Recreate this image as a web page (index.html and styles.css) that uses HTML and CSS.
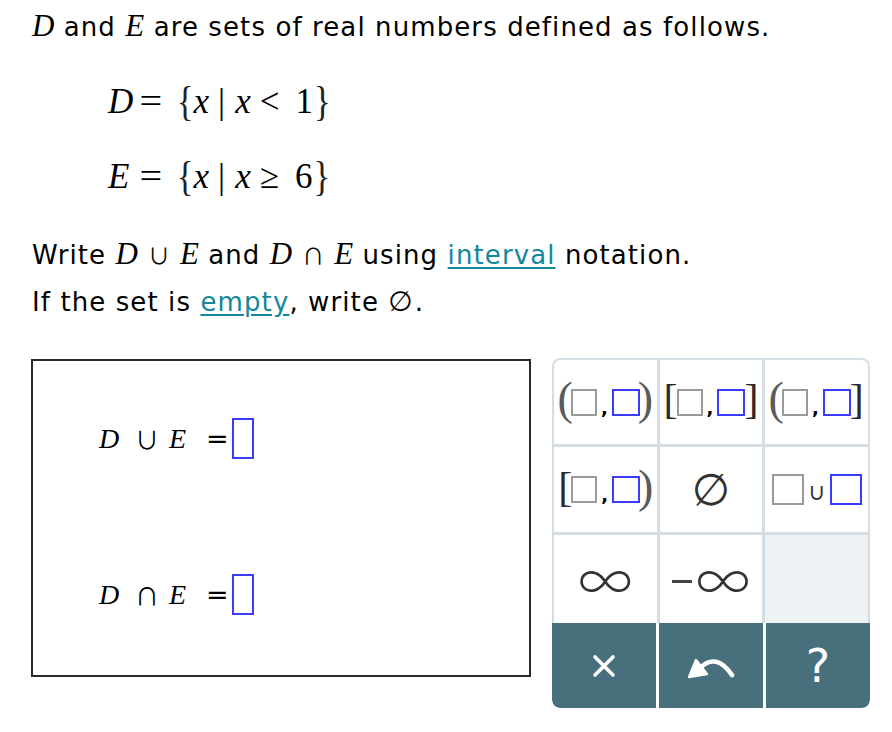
FILE: index.html
```html
<!DOCTYPE html>
<html>
<head>
<meta charset="utf-8">
<link rel="stylesheet" href="styles.css">
</head>
<body>
<div class="page">
  <p class="intro"><i class="mv">D</i> and <i class="mv">E</i> are sets of real numbers defined as follows.</p>
  <div class="defs">
    <div class="def"><i class="mi lead">D</i><span class="eq">=</span><span class="br">{</span><i class="mi">x</i><span class="bar">|</span><i class="mi sp-x">x</i><span class="rel">&lt;</span><span class="num">1</span><span class="br close">}</span></div>
    <div class="def"><i class="mi lead">E</i><span class="eq">=</span><span class="br">{</span><i class="mi">x</i><span class="bar">|</span><i class="mi sp-x">x</i><span class="rel">≥</span><span class="num">6</span><span class="br close">}</span></div>
  </div>
  <p class="instr first">Write <i class="mv">D</i><span class="op"><span class="op-g">∪</span></span><i class="mv">E</i> and <i class="mv">D</i><span class="op"><span class="op-g">∩</span></span><i class="mv">E</i> using <a class="link" href="#">interval</a> notation.</p>
  <p class="instr">If the set is <a class="link" href="#">empty</a>, write <span class="empty">∅</span>.</p>

  <div class="work">
    <div class="answer-box">
      <div class="ans-row">
        <i class="a-var a-d">D</i><span class="a-op">∪</span><i class="a-var a-e">E</i><span class="a-eq">=</span><span class="slot"></span>
      </div>
      <div class="ans-row">
        <i class="a-var a-d">D</i><span class="a-op">∩</span><i class="a-var a-e">E</i><span class="a-eq">=</span><span class="slot"></span>
      </div>
    </div>

    <div class="keypad">
      <div class="keys">
        <div class="key"><span class="paren">(</span><span class="kbox grey"></span><span class="comma">,</span><span class="kbox blue"></span><span class="paren">)</span></div>
        <div class="key"><span class="brack">[</span><span class="kbox grey"></span><span class="comma">,</span><span class="kbox blue"></span><span class="brack">]</span></div>
        <div class="key"><span class="paren">(</span><span class="kbox grey"></span><span class="comma">,</span><span class="kbox blue"></span><span class="brack">]</span></div>
        <div class="key"><span class="brack">[</span><span class="kbox grey"></span><span class="comma">,</span><span class="kbox blue"></span><span class="paren">)</span></div>
        <div class="key"><span class="k-empty">∅</span></div>
        <div class="key"><span class="kbox big grey"></span><span class="k-cup">∪</span><span class="kbox big blue"></span></div>
        <div class="key"><span class="inf">∞</span></div>
        <div class="key"><span class="minus"></span><span class="inf">∞</span></div>
        <div class="key blank"></div>
      </div>
      <div class="actions">
        <div class="act">
          <svg width="24" height="24" viewBox="0 0 24 24"><path d="M3 3 L21 21 M21 3 L3 21" stroke="#fff" stroke-width="3.6" stroke-linecap="round" fill="none"/></svg>
        </div>
        <div class="act">
          <svg class="undo" width="48" height="24" viewBox="0 0 48 24"><path d="M13 12 Q 29 -4 45 19" stroke="#fff" stroke-width="4.6" stroke-linecap="round" fill="none"/><path d="M2 21 L9 4 L20 18 Z" fill="#fff" stroke="#fff" stroke-width="2.4" stroke-linejoin="round"/></svg>
        </div>
        <div class="act"><span class="help">?</span></div>
      </div>
    </div>
  </div>
</div>
</body>
</html>
```

FILE: styles.css
```css
html, body {
  margin: 0;
  padding: 0;
  background: #fff;
}

.page {
  padding: 10px 0 0 32px;
  font-family: "DejaVu Sans", Verdana, sans-serif;
  color: #000;
}

.intro {
  margin: 0;
  height: 32px;
  font-size: 26px;
  line-height: 32px;
  letter-spacing: 1.1px;
  white-space: nowrap;
}

.mv {
  font-family: "Liberation Serif", "Times New Roman", serif;
  font-style: italic;
  font-size: 31px;
  letter-spacing: 0;
}

.defs {
  margin-top: 22px;
  padding-left: 76px;
  font-family: "Liberation Serif", "Times New Roman", serif;
  font-size: 35px;
}

.def {
  height: 75px;
  line-height: 75px;
  white-space: nowrap;
}

.mi {
  font-style: italic;
}

.lead {
  display: inline-block;
  width: 28px;
}

.eq {
  display: inline-block;
  margin-left: 5px;
  transform: scaleX(1.15);
}

.br {
  display: inline-block;
  color: #222;
  transform: scaleY(1.18);
  margin-left: 16px;
}

.br.close {
  margin-left: 1px;
}

.bar {
  margin-left: 9px;
}

.sp-x {
  margin-left: 10px;
}

.rel {
  margin-left: 9px;
}

.num {
  margin-left: 16px;
}

.instr {
  margin: 0;
  height: 48px;
  font-size: 26px;
  line-height: 48px;
  letter-spacing: 1.1px;
  white-space: nowrap;
}

.instr.first {
  margin-top: 16px;
}

.op {
  display: inline-block;
  width: 42px;
  text-align: center;
  letter-spacing: 0;
}

.op-g {
  display: inline-block;
  font-family: "Noto Sans CJK JP", "DejaVu Sans", sans-serif;
  font-size: 22px;
}

.link {
  color: #12889a;
  text-decoration: underline;
  text-underline-offset: 3px;
}

.empty {
  font-size: 28px;
  letter-spacing: 0;
  margin-right: 2px;
}

.work {
  display: flex;
  align-items: flex-start;
  margin: 32px 0 0 -1px;
}

.answer-box {
  box-sizing: border-box;
  width: 500px;
  height: 318px;
  margin-top: 1px;
  border: 2px solid #2a2a2a;
  padding: 57px 0 0 66px;
  display: flex;
  flex-direction: column;
  gap: 115px;
}

.ans-row {
  display: flex;
  align-items: center;
  height: 41px;
}

.a-var {
  display: inline-block;
  font-family: "Liberation Serif", "Times New Roman", serif;
  font-style: italic;
  font-size: 28px;
}

.a-d { width: 36px; }
.a-e { width: 37px; }

.a-op {
  display: inline-block;
  width: 34px;
  font-family: "Noto Sans CJK JP", "DejaVu Sans", sans-serif;
  font-size: 24px;
  line-height: 32px;
}

.a-eq {
  display: inline-block;
  width: 26px;
  font-family: "DejaVu Sans", sans-serif;
  font-size: 27px;
}

.slot {
  box-sizing: border-box;
  width: 22px;
  height: 41px;
  border: 2px solid #3b3bff;
}

.keypad {
  width: 318px;
  margin-left: 21px;
  border-radius: 8px;
  overflow: hidden;
}

.keys {
  display: grid;
  grid-template-columns: 1fr 1fr 1fr;
  grid-template-rows: 84px 85px 88px;
  gap: 3px;
  padding: 2px 2px 0 2px;
  background: #d4dee2;
  border-radius: 8px 8px 0 0;
}

.key {
  background: #fff;
  display: flex;
  align-items: center;
  justify-content: center;
}

.key:first-child { border-top-left-radius: 6px; }
.key:nth-child(3) { border-top-right-radius: 6px; }

.key.blank {
  background: #eef2f4;
}

.paren, .brack {
  font-family: "Liberation Serif", "Times New Roman", serif;
  font-size: 46px;
  line-height: 46px;
  color: #5a5a5a;
  margin: 0 -2px;
  transform: translateY(-3px);
}

.brack {
  color: #2a2a2a;
  font-size: 42px;
  margin: 0 -1px;
}

.kbox {
  box-sizing: border-box;
  width: 26px;
  height: 27px;
  border: 2px solid #9a9a9a;
}

.kbox.blue {
  width: 28px;
  border-color: #3b3bff;
}

.kbox.big {
  width: 32px;
  height: 31px;
}

.comma {
  font-family: "DejaVu Sans", sans-serif;
  font-weight: bold;
  font-size: 18px;
  margin: 10px 4px 0 4px;
}

.k-empty {
  font-family: "DejaVu Sans", sans-serif;
  font-size: 44px;
  line-height: 44px;
  color: #333;
}

.k-cup {
  font-family: "Noto Sans CJK JP", "DejaVu Sans", sans-serif;
  font-size: 18px;
  font-weight: bold;
  color: #333;
  margin: 4px 4px 0 4px;
}

.inf {
  display: inline-block;
  font-family: "Noto Sans CJK JP", "DejaVu Sans", sans-serif;
  font-size: 54px;
  font-weight: 300;
  line-height: 50px;
  color: #333;
}

.minus {
  display: inline-block;
  width: 20px;
  height: 3px;
  background: #444;
  margin: 4px 4px 0 0;
}

.actions {
  display: grid;
  grid-template-columns: 1fr 1fr 1fr;
  gap: 3px;
  height: 85px;
  background: #fff;
}

.act {
  background: #476f7c;
  display: flex;
  align-items: center;
  justify-content: center;
}

.act:first-child { border-bottom-left-radius: 8px; }
.act:last-child { border-bottom-right-radius: 8px; }

.undo {
  margin-top: 4px;
}

.help {
  color: #fff;
  font-family: "DejaVu Sans", sans-serif;
  font-size: 46px;
  line-height: 46px;
}
```
